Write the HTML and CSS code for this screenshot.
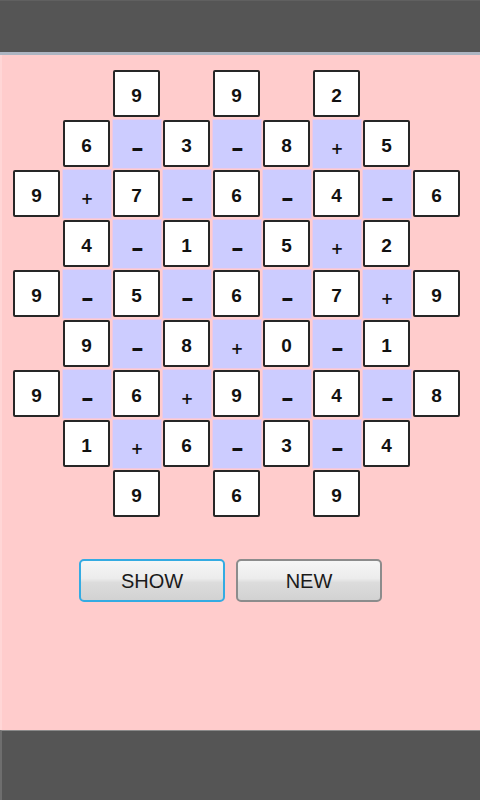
FILE: index.html
```html
<!DOCTYPE html>
<html>
<head>
<meta charset="utf-8">
<link rel="stylesheet" href="styles.css">
</head>
<body>
<div class="screen">
  <div class="topbar"></div>
  <div class="main">
    <div class="board">
      <div class="e"></div><div class="e"></div><div class="n"><span>9</span></div><div class="e"></div><div class="n"><span>9</span></div><div class="e"></div><div class="n"><span>2</span></div><div class="e"></div><div class="e"></div>
      <div class="e"></div><div class="n"><span>6</span></div><div class="o"><span class="m">-</span></div><div class="n"><span>3</span></div><div class="o"><span class="m">-</span></div><div class="n"><span>8</span></div><div class="o"><span class="p">+</span></div><div class="n"><span>5</span></div><div class="e"></div>
      <div class="n"><span>9</span></div><div class="o"><span class="p">+</span></div><div class="n"><span>7</span></div><div class="o"><span class="m">-</span></div><div class="n"><span>6</span></div><div class="o"><span class="m">-</span></div><div class="n"><span>4</span></div><div class="o"><span class="m">-</span></div><div class="n"><span>6</span></div>
      <div class="e"></div><div class="n"><span>4</span></div><div class="o"><span class="m">-</span></div><div class="n"><span>1</span></div><div class="o"><span class="m">-</span></div><div class="n"><span>5</span></div><div class="o"><span class="p">+</span></div><div class="n"><span>2</span></div><div class="e"></div>
      <div class="n"><span>9</span></div><div class="o"><span class="m">-</span></div><div class="n"><span>5</span></div><div class="o"><span class="m">-</span></div><div class="n"><span>6</span></div><div class="o"><span class="m">-</span></div><div class="n"><span>7</span></div><div class="o"><span class="p">+</span></div><div class="n"><span>9</span></div>
      <div class="e"></div><div class="n"><span>9</span></div><div class="o"><span class="m">-</span></div><div class="n"><span>8</span></div><div class="o"><span class="p">+</span></div><div class="n"><span>0</span></div><div class="o"><span class="m">-</span></div><div class="n"><span>1</span></div><div class="e"></div>
      <div class="n"><span>9</span></div><div class="o"><span class="m">-</span></div><div class="n"><span>6</span></div><div class="o"><span class="p">+</span></div><div class="n"><span>9</span></div><div class="o"><span class="m">-</span></div><div class="n"><span>4</span></div><div class="o"><span class="m">-</span></div><div class="n"><span>8</span></div>
      <div class="e"></div><div class="n"><span>1</span></div><div class="o"><span class="p">+</span></div><div class="n"><span>6</span></div><div class="o"><span class="m">-</span></div><div class="n"><span>3</span></div><div class="o"><span class="m">-</span></div><div class="n"><span>4</span></div><div class="e"></div>
      <div class="e"></div><div class="e"></div><div class="n"><span>9</span></div><div class="e"></div><div class="n"><span>6</span></div><div class="e"></div><div class="n"><span>9</span></div><div class="e"></div><div class="e"></div>
    </div>
    <div class="buttons">
      <button class="btn focus">SHOW</button>
      <button class="btn">NEW</button>
    </div>
  </div>
  <div class="bottombar"></div>
</div>
</body>
</html>
```
FILE: styles.css
```css
html, body {
  margin: 0;
  padding: 0;
}
body {
  width: 480px;
  height: 800px;
  overflow: hidden;
  font-family: "Liberation Sans", Arial, sans-serif;
}
.screen {
  display: flex;
  flex-direction: column;
  height: 800px;
}
.topbar {
  height: 51px;
  background: #555555;
  border-top: 1px solid #606060;
  border-bottom: 3px solid #adb5c2;
}
.main {
  flex: 1;
  background: #ffcccc;
  border-left: 2px solid #ffd6d6;
  padding: 14px 0 0 10px;
  box-sizing: border-box;
}
.board {
  display: grid;
  grid-template-columns: repeat(9, 50px);
  grid-template-rows: repeat(9, 50px);
}
.o {
  background: #ccccff;
  box-shadow: inset 0 0 0 1px #eec8e4;
  display: flex;
  justify-content: center;
  align-items: center;
  font-family: "DejaVu Sans", sans-serif;
  font-weight: bold;
  color: #111;
}
.o .p {
  font-size: 15px;
  padding-top: 10px;
}
.o .m {
  font-size: 16px;
  padding-top: 7px;
  transform: scale(2, 1.3);
}
.n {
  margin: 1px 0 0 1px;
  width: 47px;
  height: 47px;
  box-sizing: border-box;
  background: #ffffff;
  border: 2px solid #262626;
  border-radius: 2px;
  display: flex;
  justify-content: center;
  align-items: center;
  font-weight: bold;
  font-size: 19px;
  color: #111;
}
.n span {
  padding-top: 5px;
}
.buttons {
  display: flex;
  gap: 11px;
  margin: 40px 0 0 67px;
}
.btn {
  width: 146px;
  height: 43px;
  border: 2px solid #8c8c8c;
  border-radius: 5px;
  background: linear-gradient(#f6f6f6 0%, #ececec 45%, #dcdcdc 55%, #d2d2d2 100%);
  font-family: "Liberation Sans", Arial, sans-serif;
  font-size: 20px;
  color: #1a1a1a;
  padding: 2px 0 0 0;
}
.btn.focus {
  border-color: #34abe2;
}
.bottombar {
  height: 69px;
  background: #555555;
  border-top: 1px solid #8a8a8a;
  border-left: 2px solid #6e6e6e;
}
```
